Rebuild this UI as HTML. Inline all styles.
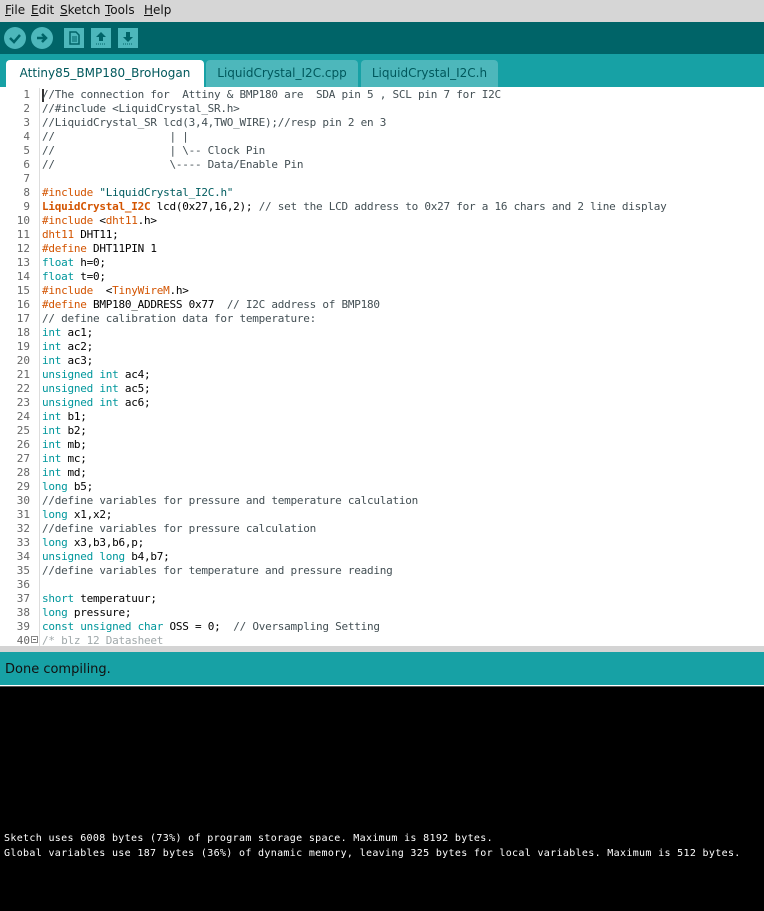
<!DOCTYPE html>
<html><head><meta charset="utf-8"><style>
body{margin:0;width:764px;height:911px;overflow:hidden;background:#fff;font-family:"DejaVu Sans",sans-serif;position:relative}
#menu{position:absolute;top:0;left:0;width:764px;height:22px;background:#d6d6d6;font-size:12px;color:#111}
#menu span{position:absolute;top:3px}
#menu u{text-decoration:underline}
#tb{position:absolute;top:22px;left:0;width:764px;height:32px;background:#006468}
.c{position:absolute;top:5px;width:22px;height:22px;border-radius:50%;background:#4db7bb}
.s{position:absolute;top:6px;width:20px;height:20px;background:#4db7bb}
#tabs{position:absolute;top:54px;left:0;width:764px;height:33px;background:#17a1a5}
.tab{position:absolute;top:6px;height:27px;border-radius:4px 4px 0 0;font-size:12px;line-height:26px;text-align:center;color:#00585c}
#ed{position:absolute;top:87px;left:0;width:764px;height:559px;background:#fff}
.ln{position:absolute;left:0;width:30px;text-align:right;font:11px "DejaVu Sans Mono",monospace;color:#666}
.tx{position:absolute;left:42px;font:11px "DejaVu Sans Mono",monospace;letter-spacing:-0.25px;color:#000;white-space:pre}
.k{color:#d35400}.t{color:#00979c}.m{color:#434f54}.b{color:#d35400;font-weight:bold}.q{color:#005c5f}
#sep{position:absolute;top:646px;left:0;width:764px;height:6px;background:#d4d4d4}
#st{position:absolute;top:652px;left:0;width:764px;height:33px;background:#17a1a5;font-size:13px;color:#111;line-height:36px;padding-left:5px;box-sizing:border-box}
#con{position:absolute;top:686px;left:0;width:764px;height:225px;background:#000;border-top:1px solid #555;box-sizing:border-box}
.cl{position:absolute;left:4px;font:10px "DejaVu Sans Mono",monospace;letter-spacing:0.33px;color:#fff;white-space:pre}
</style></head><body>
<div id="menu"><span style="left:5px"><u>F</u>ile</span><span style="left:31px"><u>E</u>dit</span><span style="left:60px"><u>S</u>ketch</span><span style="left:105px"><u>T</u>ools</span><span style="left:144px"><u>H</u>elp</span></div>
<div id="tb">
<div class="c" style="left:4px"><svg width="22" height="22"><path d="M6 11l4 4 6-7" stroke="#006468" stroke-width="2.5" fill="none"/></svg></div>
<div class="c" style="left:31px"><svg width="22" height="22"><path d="M6 11h8M11 7l4 4-4 4" stroke="#006468" stroke-width="2.5" fill="none"/></svg></div>
<div class="s" style="left:64px"><svg width="20" height="20"><path d="M6 4h6l3 3v9H6z" fill="none" stroke="#006468" stroke-width="1.5"/><path d="M8 9h5M8 11h5M8 13h5" stroke="#006468"/></svg></div>
<div class="s" style="left:91px"><svg width="20" height="20"><path d="M10 4l-5 5h3v4h4V9h3z" fill="#006468"/><path d="M5 16h10" stroke="#006468" stroke-dasharray="1 1"/></svg></div>
<div class="s" style="left:118px"><svg width="20" height="20"><path d="M10 14l-5-5h3V4h4v5h3z" fill="#006468"/><path d="M5 16h10" stroke="#006468" stroke-dasharray="1 1"/></svg></div>
</div>
<div id="tabs">
<div class="tab" style="left:6px;width:198px;background:#fff">Attiny85_BMP180_BroHogan</div>
<div class="tab" style="left:206px;width:152px;background:#4db7bb">LiquidCrystal_I2C.cpp</div>
<div class="tab" style="left:361px;width:137px;background:#4db7bb">LiquidCrystal_I2C.h</div>
</div>
<div id="ed">
<div style="position:absolute;left:42px;top:2px;width:2px;height:13px;background:#333"></div>
</div>
<div id="lines"></div>
<script>
var L=[
'<span class="m">//The connection for  Attiny &amp; BMP180 are  SDA pin 5 , SCL pin 7 for I2C</span>',
'<span class="m">//#include &lt;LiquidCrystal_SR.h&gt;</span>',
'<span class="m">//LiquidCrystal_SR lcd(3,4,TWO_WIRE);//resp pin 2 en 3</span>',
'<span class="m">//                  | |</span>',
'<span class="m">//                  | \\-- Clock Pin</span>',
'<span class="m">//                  \\---- Data/Enable Pin</span>',
'',
'<span class="k">#include</span> <span class="q">"LiquidCrystal_I2C.h"</span>',
'<span class="b">LiquidCrystal_I2C</span> lcd(0x27,16,2); <span class="m">// set the LCD address to 0x27 for a 16 chars and 2 line display</span>',
'<span class="k">#include</span> &lt;<span class="k">dht11</span>.h&gt;',
'<span class="k">dht11</span> DHT11;',
'<span class="k">#define</span> DHT11PIN 1',
'<span class="t">float</span> h=0;',
'<span class="t">float</span> t=0;',
'<span class="k">#include</span>  &lt;<span class="k">TinyWireM</span>.h&gt;',
'<span class="k">#define</span> BMP180_ADDRESS 0x77  <span class="m">// I2C address of BMP180</span>',
'<span class="m">// define calibration data for temperature:</span>',
'<span class="t">int</span> ac1;','<span class="t">int</span> ac2;','<span class="t">int</span> ac3;',
'<span class="t">unsigned int</span> ac4;','<span class="t">unsigned int</span> ac5;','<span class="t">unsigned int</span> ac6;',
'<span class="t">int</span> b1;','<span class="t">int</span> b2;','<span class="t">int</span> mb;','<span class="t">int</span> mc;','<span class="t">int</span> md;',
'<span class="t">long</span> b5;',
'<span class="m">//define variables for pressure and temperature calculation</span>',
'<span class="t">long</span> x1,x2;',
'<span class="m">//define variables for pressure calculation</span>',
'<span class="t">long</span> x3,b3,b6,p;',
'<span class="t">unsigned long</span> b4,b7;',
'<span class="m">//define variables for temperature and pressure reading</span>',
'',
'<span class="t">short</span> temperatuur;',
'<span class="t">long</span> pressure;',
'<span class="t">const unsigned char</span> OSS = 0;  <span class="m">// Oversampling Setting</span>',
'<span style="color:#a0a8aa">/* blz 12 Datasheet</span>'];
var h='';
for(var i=0;i<L.length;i++){var y=88+i*14;
h+='<div class="ln" style="top:'+y+'px">'+(i+1)+'</div><div class="tx" style="top:'+y+'px">'+L[i]+'</div>';}
h+='<div style="position:absolute;left:31px;top:636px;width:7px;height:7px;border:1px solid #888;box-sizing:border-box"><div style="position:absolute;left:1px;top:2px;width:3px;height:1px;background:#666"></div></div>';
h+='<div style="position:absolute;left:39px;top:88px;width:1px;height:558px;background:#ddd"></div>';
document.getElementById('lines').innerHTML=h;
</script>
<div id="sep"></div>
<div id="st">Done compiling.</div>
<div id="con">
<div class="cl" style="top:146px">Sketch uses 6008 bytes (73%) of program storage space. Maximum is 8192 bytes.</div>
<div class="cl" style="top:161px">Global variables use 187 bytes (36%) of dynamic memory, leaving 325 bytes for local variables. Maximum is 512 bytes.</div>
</div>
</body></html>
